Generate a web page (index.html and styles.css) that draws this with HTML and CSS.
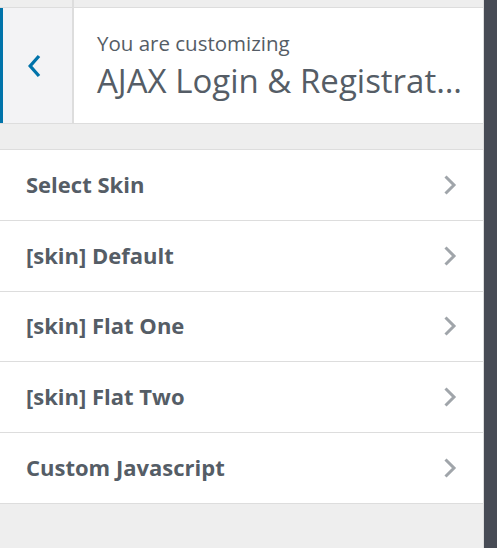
FILE: index.html
```html
<!DOCTYPE html>
<html lang="en">
<head>
<meta charset="utf-8">
<title>Customizer</title>
<link rel="stylesheet" href="styles.css">
</head>
<body>
<div class="frame">
  <div class="sidebar">
    <div class="topbar"><div class="topbar-cell"></div></div>
    <div class="header">
      <button class="back" aria-label="Back">
        <svg width="15" height="24" viewBox="0 0 15 24"><path d="M12 2 L3.2 12 L12 22" fill="none" stroke="#0073aa" stroke-width="3.3"/></svg>
      </button>
      <div class="title-wrap">
        <div class="subtitle">You are customizing</div>
        <div class="title">AJAX Login &amp; Registrat…</div>
      </div>
    </div>
    <ul class="sections">
      <li class="section"><span>Select Skin</span><svg class="chev" width="14" height="20" viewBox="0 0 14 20"><path d="M2.5 1.5 L11 10 L2.5 18.5" fill="none" stroke="#a0a5aa" stroke-width="3"/></svg></li>
      <li class="section"><span>[skin] Default</span><svg class="chev" width="14" height="20" viewBox="0 0 14 20"><path d="M2.5 1.5 L11 10 L2.5 18.5" fill="none" stroke="#a0a5aa" stroke-width="3"/></svg></li>
      <li class="section"><span>[skin] Flat One</span><svg class="chev" width="14" height="20" viewBox="0 0 14 20"><path d="M2.5 1.5 L11 10 L2.5 18.5" fill="none" stroke="#a0a5aa" stroke-width="3"/></svg></li>
      <li class="section"><span>[skin] Flat Two</span><svg class="chev" width="14" height="20" viewBox="0 0 14 20"><path d="M2.5 1.5 L11 10 L2.5 18.5" fill="none" stroke="#a0a5aa" stroke-width="3"/></svg></li>
      <li class="section"><span>Custom Javascript</span><svg class="chev" width="14" height="20" viewBox="0 0 14 20"><path d="M2.5 1.5 L11 10 L2.5 18.5" fill="none" stroke="#a0a5aa" stroke-width="3"/></svg></li>
    </ul>
  </div>
  <div class="preview"></div>
</div>
</body>
</html>
```

FILE: styles.css
```css
html, body {
  margin: 0;
  padding: 0;
  height: 100%;
}
body {
  font-family: "Open Sans", Lato, sans-serif;
  color: #555d66;
  background: #eeeeee;
}
.frame {
  display: flex;
  height: 548px;
}
.sidebar {
  width: 483px;
  border-right: 1px solid #dddddd;
  background: #eeeeee;
  display: flex;
  flex-direction: column;
}
.preview {
  flex: 1;
  background: #474b55;
}
.topbar {
  height: 7px;
  border-bottom: 1px solid #dddddd;
}
.topbar-cell {
  width: 72px;
  height: 100%;
  border-right: 2px solid #dddddd;
}
.header {
  display: flex;
  height: 115px;
  background: #ffffff;
  border-bottom: 1px solid #dddddd;
}
.back {
  width: 74px;
  flex: none;
  box-sizing: border-box;
  border: 0;
  border-left: 3px solid #0073aa;
  border-right: 2px solid #dddddd;
  background: #f3f3f5;
  padding: 0 0 0 24px;
  display: flex;
  align-items: center;
  margin: 0;
}
.back svg {
  display: block;
}
.title-wrap {
  padding: 23px 0 0 23px;
  white-space: nowrap;
  overflow: hidden;
}
.subtitle {
  font-size: 20.5px;
  line-height: 24px;
}
.title {
  font-size: 33px;
  line-height: 40px;
  margin-top: 6px;
}
.sections {
  list-style: none;
  margin: 25px 0 0;
  padding: 0;
  border-top: 1px solid #dddddd;
}
.section {
  display: flex;
  align-items: center;
  justify-content: space-between;
  height: 69.75px;
  box-sizing: content-box;
  padding: 0 26px 0 26px;
  background: #ffffff;
  border-bottom: 1px solid #dddddd;
  font-size: 22px;
  font-weight: 700;
}
.section span {
  position: relative;
  top: -1px;
}
.chev {
  display: block;
}
```
